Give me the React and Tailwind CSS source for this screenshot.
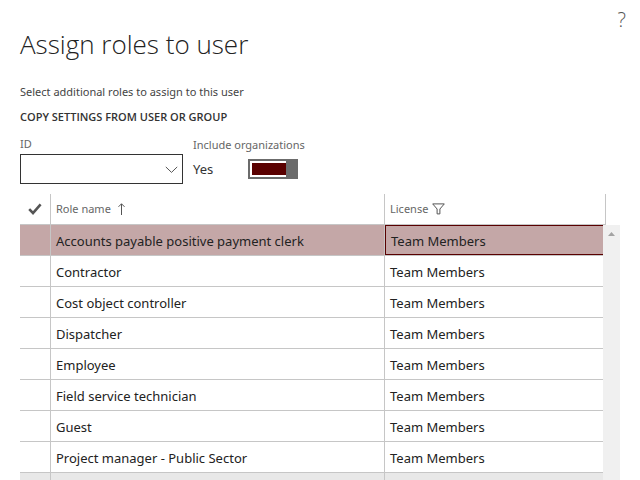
import React, { useState } from 'react';

const initialRoles = [
  { name: 'Accounts payable positive payment clerk', license: 'Team Members' },
  { name: 'Contractor', license: 'Team Members' },
  { name: 'Cost object controller', license: 'Team Members' },
  { name: 'Dispatcher', license: 'Team Members' },
  { name: 'Employee', license: 'Team Members' },
  { name: 'Field service technician', license: 'Team Members' },
  { name: 'Guest', license: 'Team Members' },
  { name: 'Project manager - Public Sector', license: 'Team Members' },
];

const CheckIcon = () => (
  <svg width="14" height="12" viewBox="0 0 14 12" fill="none" stroke="#555" strokeWidth="2.6">
    <path d="M1.2 6.2 L5 10 L12.6 1.4" />
  </svg>
);

const SortIcon = () => (
  <svg width="7" height="12" viewBox="0 0 7 12" fill="none" stroke="#555" strokeWidth="1">
    <path d="M3.5 12 V0.8 M0.5 3.8 L3.5 0.8 L6.5 3.8" />
  </svg>
);

const FilterIcon = () => (
  <svg width="13" height="12" viewBox="0 0 13 12" fill="none" stroke="#555" strokeWidth="1">
    <path d="M0.7 0.9 H12.3 L7.9 6 V10.9 H5.1 V6 Z" />
  </svg>
);

const ChevronIcon = () => (
  <svg
    className="absolute right-[5px] top-3 pointer-events-none"
    width="13"
    height="8"
    viewBox="0 0 13 8"
    fill="none"
    stroke="#555"
    strokeWidth="1"
  >
    <path d="M0.8 0.9 L6.5 6.4 L12.2 0.9" />
  </svg>
);

// One row of the grid; the license cell carries the focus outline when selected.
const RoleRow = ({ role, selected, onSelect, children }) => (
  <tr className={`cursor-default ${selected ? 'bg-[#c4a7a7]' : 'bg-white'}`} onClick={onSelect}>
    <td className="h-[31px] border-r border-b border-[#c6c6c6]"></td>
    <td className="h-[31px] border-r border-b border-[#c6c6c6] p-0 pl-[5px] pt-[3px] truncate">
      {role.name}
    </td>
    <td className="h-[31px] border-b border-[#c6c6c6] p-0">
      <div
        className={`h-[30px] flex items-center pl-[5px] pt-[3px] ${
          selected ? 'border border-r-0 border-[#5a0000]' : ''
        }`}
      >
        {role.license}
      </div>
    </td>
    {children}
  </tr>
);

const App = () => {
  const [selectedIndex, setSelectedIndex] = useState(0);
  const [includeOrgs, setIncludeOrgs] = useState(true);

  return (
    <div className="h-screen overflow-hidden flex flex-col bg-white px-5 font-['Noto_Sans','Open_Sans',sans-serif] text-[#333]">
      {/* Header */}
      <div className="relative pt-6">
        <h1 className="font-['Open_Sans'] text-[26px] leading-[40px] font-light text-[#222]">
          Assign roles to user
        </h1>
        <button
          type="button"
          aria-label="Help"
          className="absolute top-2 -right-[6px] font-['Open_Sans'] text-[20px] leading-[24px] font-light text-[#555]"
        >
          ?
        </button>
      </div>
      <p className="mt-[18px] text-[11px] leading-[20px] text-[#444]">
        Select additional roles to assign to this user
      </p>
      <h2 className="mt-[5px] font-['Open_Sans'] text-[11px] leading-[20px] font-semibold">
        COPY SETTINGS FROM USER OR GROUP
      </h2>

      {/* Copy settings */}
      <div className="mt-2 flex items-start gap-[10px]">
        <div>
          <label htmlFor="copy-id" className="block text-[11px] leading-[18px] text-[#666]">
            ID
          </label>
          <div className="relative mt-[1px]">
            <select
              id="copy-id"
              className="block appearance-none w-[163px] h-[30px] border border-[#333] bg-white px-2 text-[13px]"
            >
              <option></option>
            </select>
            <ChevronIcon />
          </div>
        </div>
        <div>
          <label htmlFor="include-orgs" className="block text-[11px] leading-[20px] text-[#666]">
            Include organizations
          </label>
          <div className="mt-[3px] flex items-center">
            <span className="w-[55px] text-[13px] leading-[22px]">{includeOrgs ? 'Yes' : 'No'}</span>
            <input
              id="include-orgs"
              type="checkbox"
              role="switch"
              checked={includeOrgs}
              onChange={() => setIncludeOrgs(!includeOrgs)}
              className="appearance-none w-[50px] h-5 border-2 border-l-[12px] border-[#6b6b6b] p-[2px] pl-0 bg-clip-content checked:border-l-2 checked:border-r-[12px] checked:pl-[2px] checked:pr-0 checked:bg-[#5a0000]"
            />
          </div>
        </div>
      </div>

      {/* Roles grid */}
      <div className="mt-[10px] flex-1 min-h-0 overflow-hidden">
        <table className="w-full table-fixed border-separate border-spacing-0 text-[13px] text-[#222]">
          <colgroup>
            <col className="w-[31px]" />
            <col className="w-[334px]" />
            <col />
            <col className="w-[17px]" />
          </colgroup>
          <thead className="text-[11px] text-[#666]">
            <tr>
              <th aria-label="Select all" className="h-[31px] p-0 border-r border-b border-[#c6c6c6]">
                <div className="flex justify-center">
                  <CheckIcon />
                </div>
              </th>
              <th className="h-[31px] p-0 pl-[5px] border-r border-b border-[#c6c6c6] font-normal">
                <div className="flex items-center gap-[7px]">
                  Role name
                  <SortIcon />
                </div>
              </th>
              <th className="h-[31px] p-0 pl-[5px] border-b border-[#c6c6c6] font-normal">
                <div className="flex items-center gap-1">
                  License
                  <FilterIcon />
                </div>
              </th>
              <td className="h-[31px] p-0">
                <div className="w-[3px] h-[31px] border-r border-b border-[#c6c6c6]"></div>
              </td>
            </tr>
          </thead>
          <tbody>
            {initialRoles.map((role, index) => (
              <RoleRow
                key={role.name}
                role={role}
                selected={index === selectedIndex}
                onSelect={() => setSelectedIndex(index)}
              >
                {index === 0 && (
                  <td rowSpan={initialRoles.length + 1} className="bg-[#f0f0f0] p-0 align-top">
                    <svg className="mt-[7px] ml-[5px]" width="7" height="4" viewBox="0 0 7 4">
                      <path d="M0 4 L3.5 0 L7 4 Z" fill="#a3a3a3" />
                    </svg>
                  </td>
                )}
              </RoleRow>
            ))}
            <tr className="bg-[#e8e8e8]">
              <td className="h-[31px] border-r border-[#c6c6c6]"></td>
              <td className="h-[31px] border-r border-[#c6c6c6]"></td>
              <td className="h-[31px]"></td>
            </tr>
          </tbody>
        </table>
      </div>
    </div>
  );
};

export default App;
